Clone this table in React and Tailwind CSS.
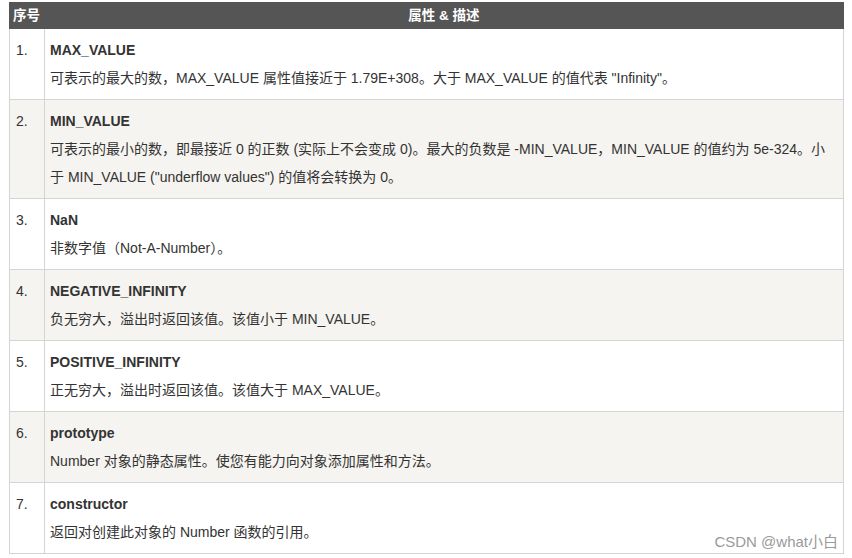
const rows = [
  {
    name: 'MAX_VALUE',
    desc: ['可表示的最大的数，MAX_VALUE 属性值接近于 1.79E+308。大于 MAX_VALUE 的值代表 "Infinity"。'],
  },
  {
    name: 'MIN_VALUE',
    desc: [
      '可表示的最小的数，即最接近 0 的正数 (实际上不会变成 0)。最大的负数是 -MIN_VALUE，MIN_VALUE 的值约为 5e-324。小',
      '于 MIN_VALUE ("underflow values") 的值将会转换为 0。',
    ],
  },
  { name: 'NaN', desc: ['非数字值（Not-A-Number）。'] },
  { name: 'NEGATIVE_INFINITY', desc: ['负无穷大，溢出时返回该值。该值小于 MIN_VALUE。'] },
  { name: 'POSITIVE_INFINITY', desc: ['正无穷大，溢出时返回该值。该值大于 MAX_VALUE。'] },
  { name: 'prototype', desc: ['Number 对象的静态属性。使您有能力向对象添加属性和方法。'] },
  { name: 'constructor', desc: ['返回对创建此对象的 Number 函数的引用。'] },
]

export default function App() {
  return (
    <div
      className="relative w-[852px] h-[558px] bg-white overflow-hidden text-[14px] text-[#333]"
      style={{ fontFamily: '"Liberation Sans", Arial, "Noto Sans CJK SC", sans-serif' }}
    >
      <div className="ml-[9px] mt-[2px] w-[835px]">
        <div className="flex h-[27px] bg-[#555555] text-white font-bold leading-[27px] text-[13.5px]">
          <div className="w-[35px] pl-[4px]">序号</div>
          <div className="flex-1 text-center">属性 &amp; 描述</div>
        </div>
        {rows.map((r, i) => (
          <div
            key={r.name}
            className={`flex border-x border-b border-[#d4d4d4] ${i % 2 === 1 ? 'bg-[#f6f4f0]' : 'bg-white'}`}
          >
            <div className="w-[35px] shrink-0 border-r border-[#d4d4d4] pl-[6px] py-[7px] leading-[28px]">
              {i + 1}.
            </div>
            <div className="flex-1 pl-[5px] py-[7px] leading-[28px]">
              <div className="font-bold">{r.name}</div>
              {r.desc.map((d) => (
                <div key={d} className="whitespace-nowrap">{d}</div>
              ))}
            </div>
          </div>
        ))}
      </div>
      <div className="absolute right-[14px] bottom-[9px] text-[15px] text-[#9a9a9a] leading-none">
        CSDN @what小白
      </div>
    </div>
  )
}
